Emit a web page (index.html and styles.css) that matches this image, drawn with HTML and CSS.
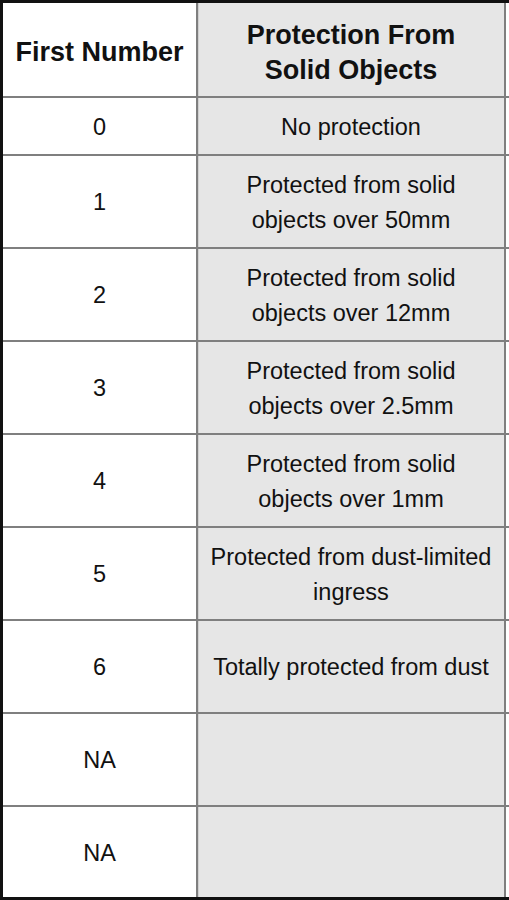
FILE: index.html
```html
<!DOCTYPE html>
<html>
<head>
<meta charset="utf-8">
<link rel="stylesheet" href="styles.css">
</head>
<body>
<div class="frame">
<table class="ip">
  <colgroup>
    <col class="c1">
    <col class="c2">
    <col class="c3">
  </colgroup>
  <thead>
    <tr class="head">
      <th class="num">First Number</th>
      <th class="desc">Protection From Solid Objects</th>
      <th class="more"></th>
    </tr>
  </thead>
  <tbody>
    <tr class="short"><td class="num">0</td><td class="desc">No protection</td><td class="more"></td></tr>
    <tr><td class="num">1</td><td class="desc">Protected from solid objects over 50mm</td><td class="more"></td></tr>
    <tr><td class="num">2</td><td class="desc">Protected from solid objects over 12mm</td><td class="more"></td></tr>
    <tr><td class="num">3</td><td class="desc">Protected from solid objects over 2.5mm</td><td class="more"></td></tr>
    <tr><td class="num">4</td><td class="desc">Protected from solid objects over 1mm</td><td class="more"></td></tr>
    <tr><td class="num">5</td><td class="desc">Protected from dust-limited ingress</td><td class="more"></td></tr>
    <tr><td class="num">6</td><td class="desc">Totally protected from dust</td><td class="more"></td></tr>
    <tr><td class="num">NA</td><td class="desc"></td><td class="more"></td></tr>
    <tr class="last"><td class="num">NA</td><td class="desc"></td><td class="more"></td></tr>
  </tbody>
</table>
</div>
</body>
</html>
```
FILE: styles.css
```css
html, body {
  margin: 0;
  padding: 0;
  background: #ffffff;
}
.frame {
  width: 509px;
  height: 900px;
  overflow: hidden;
}
.ip {
  border-collapse: separate;
  border-spacing: 0;
  table-layout: fixed;
  width: 706px;
  border-top: 3px solid #111111;
  border-left: 3px solid #111111;
  border-bottom: 3px solid #111111;
  font-family: "Liberation Sans", Arial, sans-serif;
  color: #111111;
}
.c1 { width: 195px; }
.c2 { width: 308px; }
.c3 { width: 200px; }
.ip th, .ip td {
  border-right: 2px solid #7f7f7f;
  border-bottom: 2px solid #7f7f7f;
  padding: 0 11px;
  text-align: center;
  vertical-align: middle;
  box-sizing: border-box;
}
.ip th {
  font-size: 27px;
  font-weight: bold;
  line-height: 35px;
  height: 95px;
  padding: 6px 30px 0;
}
.ip th.num { padding: 6px 4px 0; }
.ip td {
  font-size: 23.5px;
  line-height: 35px;
  height: 93px;
  padding-top: 2px;
}
.ip tr.short td { height: 58px; }
.ip tr.last td { border-bottom: none; height: 90px; }
.desc {
  background: #e6e6e6;
  box-shadow: inset 1px 0 0 #d0d0d0;
}
.num { background: #ffffff; }
.more { background: #ffffff; }
```
